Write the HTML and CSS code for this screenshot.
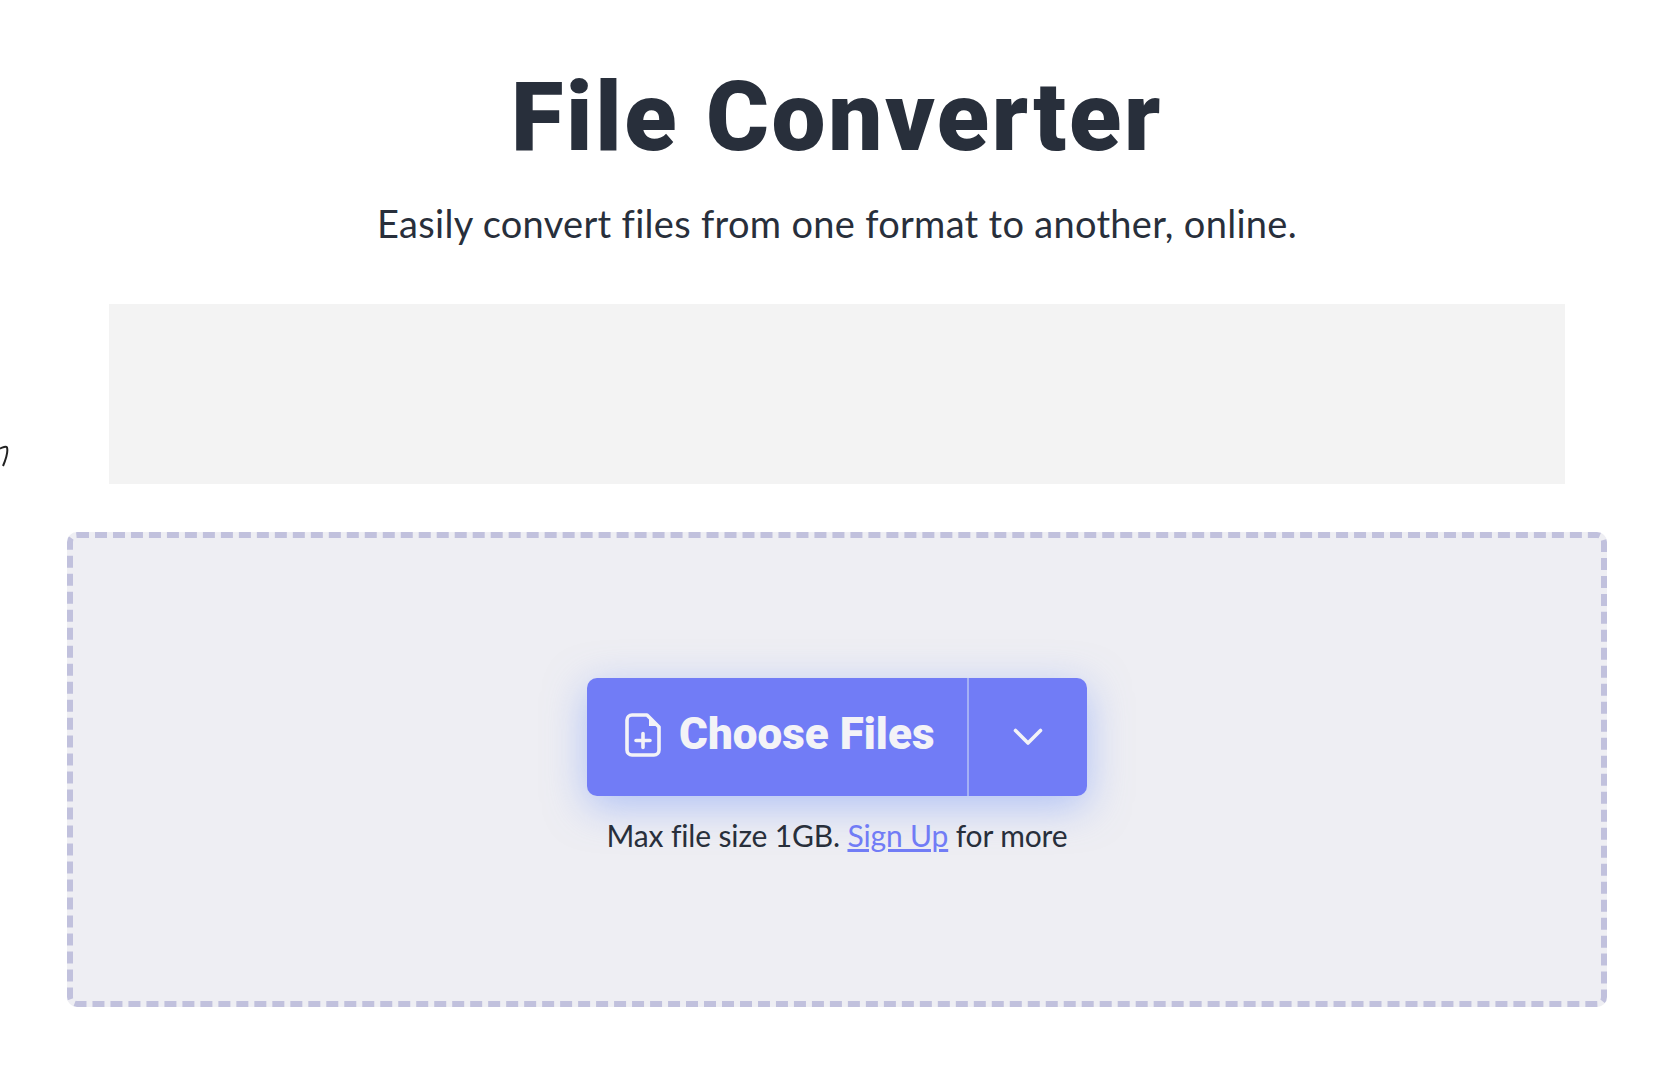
FILE: index.html
```html
<!DOCTYPE html>
<html lang="en">
<head>
	<meta charset="UTF-8">
	<title>File Converter</title>
	<link rel="stylesheet" href="styles.css">
</head>
<body>
<svg class="stray-mark" width="10" height="24" viewBox="0 0 10 24">
	<path d="M0 3.500C3 2.500 6 0.500 7 2.500C8 6 6 14 3 21" fill="none" stroke="#222" stroke-width="2"/>
</svg>
<div class="page">
	<h1 class="title">File Converter</h1>
	<p class="subtitle">Easily convert files from one format to another, online.</p>
	<div class="ad-slot"></div>
	<div class="dropzone">
		<div class="choose-btn">
			<div class="choose-main">
				<svg class="file-icon" width="36" height="44" viewBox="0 0 36 44">
					<path d="M7 2H22L34 14V37A5 5 0 0 1 29 42H7A5 5 0 0 1 2 37V7A5 5 0 0 1 7 2Z" fill="none" stroke="#f3f3f7" stroke-width="3.600" stroke-linejoin="round"/>
					<path d="M24 5V13H33Z" fill="#f3f3f7"/>
					<path d="M18 20.500V34.500M11 27.500H25" fill="none" stroke="#f3f3f7" stroke-width="3.600" stroke-linecap="round"/>
				</svg>
				<span class="choose-label">Choose Files</span>
			</div>
			<div class="choose-more">
				<svg width="30" height="18" viewBox="0 0 30 18">
					<path d="M2.500 2.500L15 15L27.500 2.500" fill="none" stroke="#f3f3f7" stroke-width="3.600" stroke-linecap="round" stroke-linejoin="round"/>
				</svg>
			</div>
		</div>
		<p class="size-note">Max file size 1GB. <a href="#">Sign Up</a> for more</p>
	</div>
</div>
</body>
</html>
```

FILE: styles.css
```css
*{margin:0;padding:0;box-sizing:border-box;}
html,body{height:100%;}
body{
	background-color:#fff;
	color:#282f3b;
	font-family:"Lato","Liberation Sans",sans-serif;
	font-variant-ligatures:none;
	overflow:hidden;
}
.stray-mark{
	position:absolute;
	top:445px;
	left:0;
}
.page{
	display:flex;
	flex-direction:column;
	align-items:center;
	padding:60px 2px 0 0;
}
.title{
	font-family:"Roboto","Liberation Sans",sans-serif;
	font-size:96px;
	font-weight:900;
	line-height:114px;
	letter-spacing:2.700px;
}
.subtitle{
	margin-top:26px;
	font-size:38px;
	line-height:46px;
	letter-spacing:.3px;
}
.ad-slot{
	width:1456px;
	height:180px;
	margin-top:58px;
	background-color:#f3f3f3;
}
.dropzone{
	display:flex;
	flex-direction:column;
	align-items:center;
	width:1540px;
	height:475px;
	margin-top:48px;
	padding-top:140px;
	background-color:#eeeef3;
	border:6px dashed #c1c1dd;
	border-radius:10px;
}
.choose-btn{
	display:flex;
	width:500px;
	height:118px;
	background-color:#717cf6;
	border-radius:10px;
	box-shadow:0 10px 40px rgba(113,150,250,.5);
	color:#f3f3f7;
}
.choose-main{
	display:flex;
	align-items:center;
	gap:18px;
	width:382px;
	padding:0 0 0 38px;
	border-right:2px solid #a4b0f5;
}
.file-icon{
	margin-top:-4px;
}
.choose-label{
	font-family:"Roboto","Liberation Sans",sans-serif;
	font-size:44px;
	font-weight:900;
	line-height:44px;
	margin-top:-6px;
}
.choose-more{
	display:flex;
	flex:1;
	align-items:center;
	justify-content:center;
}
.size-note{
	margin-top:19px;
	font-size:30px;
	line-height:40px;
	letter-spacing:-.15px;
}
.size-note a{
	color:#717cf6;
}
```
